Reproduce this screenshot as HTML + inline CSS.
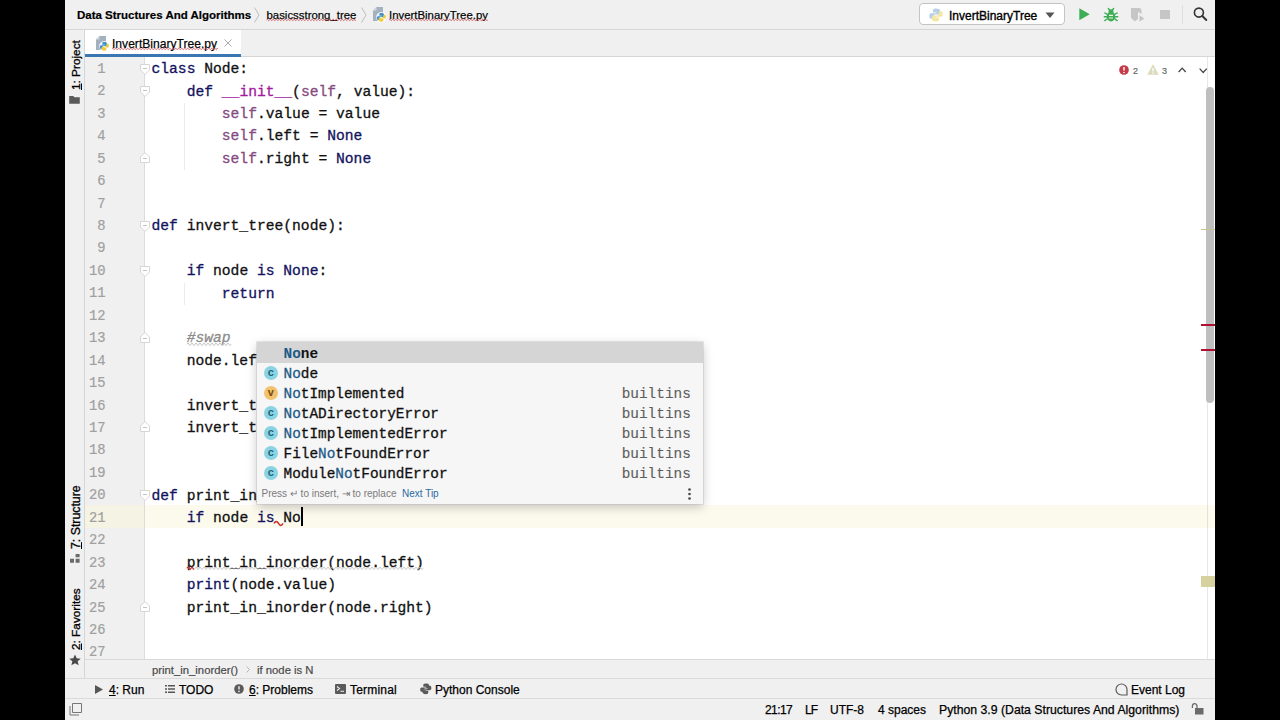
<!DOCTYPE html>
<html lang="en">
<head>
<meta charset="utf-8">
<title>InvertBinaryTree.py</title>
<style>
*{box-sizing:border-box;margin:0;padding:0}
html,body{width:1280px;height:720px;overflow:hidden;background:#000}
body{position:relative;font-family:"Liberation Sans",sans-serif;color:#000;-webkit-text-stroke:0.2px}
#app{position:absolute;left:65px;top:0;width:1150px;height:720px;background:#fff;overflow:hidden}
.abs{position:absolute}
svg{position:absolute;overflow:visible}
/* top nav */
#nav{left:0;top:0;width:1150px;height:30px;background:#f0f0f0;border-bottom:1px solid #d6d6d6}
#nav .t{position:absolute;top:6.7px;font-size:12px;line-height:16px;white-space:nowrap;color:#000}
.wavy{text-decoration:none}
/* tabs */
#tabs{left:20px;top:30px;width:1130px;height:27px;background:#f0f0f0;border-bottom:1px solid #d6d6d6}
#tab{left:0;top:0;width:155.6px;height:27px;background:#fff}
#tab .ul{position:absolute;left:0;bottom:0;width:155.6px;height:3.5px;background:#3a76b0}
/* left strip */
#strip{left:0;top:30px;width:20px;height:649px;background:#f0f0f0;border-right:1px solid #d6d6d6}
.vt{position:absolute;white-space:nowrap;font-size:12.4px;line-height:14px;-webkit-text-stroke:0.3px;transform-origin:0 0;transform:rotate(-90deg);color:#000}
/* editor */
#gutter{left:20px;top:57px;width:60px;height:602px;background:#f0f0f0;border-right:1px solid #dcdcdc}
.ln{position:absolute;left:0;width:20.5px;height:22.4px;text-align:right;font-family:"Liberation Mono",monospace;font-size:13.8px;line-height:22.4px;color:#a0a0a0}
#code{left:86.5px;top:57px;width:1040px;height:601px;font-family:"Liberation Mono",monospace;font-size:14.65px;line-height:22.4px;white-space:pre;color:#111;-webkit-text-stroke:0.3px}
.cl{position:absolute;left:0;height:22.4px;white-space:pre}
.k{color:#12125e}.s{color:#854a80}.m{color:#a3199f}.c{color:#8c8c8c;font-style:italic}.pb{color:#12125e}
.wv{text-decoration:underline wavy #b0b0b0;text-decoration-thickness:1px;text-underline-offset:3px}
.err{text-decoration:underline wavy #e03030;text-decoration-thickness:1px;text-underline-offset:3px}
#curline{left:80px;top:505.100px;width:1070px;height:22.900px;background:#fcfaed}
#caret{left:235.8px;top:507px;width:2px;height:19px;background:#000}
.guide{position:absolute;width:1px;background:#ebebeb}
.fold{position:absolute}
/* right scrollbar */
#sbar{left:1142px;top:57px;width:8px;height:602px;border-left:1px solid rgba(0,0,0,.09)}
#thumb{left:1141px;top:87px;width:7.5px;height:316px;background:#bfbfbf;border-radius:4px}
.mk{position:absolute;left:1136px;width:14px;height:2px}
/* bottom */
#crumbs{left:20px;top:659px;width:1130px;height:20px;background:#f0f0f0;border-top:1px solid #d9d9d9;font-size:11.3px;color:#4a4a4a}
#tools{-webkit-text-stroke:0.25px;left:0;top:677.5px;width:1150px;height:21px;background:#f0f0f0;border-top:1px solid #dadada;font-size:12px}
#status{-webkit-text-stroke:0.25px;left:0;top:698px;width:1150px;height:22px;background:#f0f0f0;border-top:1px solid #dadada;font-size:12px}
.bt{position:absolute;white-space:nowrap;line-height:16px}
u{text-underline-offset:1px}
/* popup */
#pop{left:191.5px;top:342px;width:446.800px;height:162.200px;background:#f6f6f6;box-shadow:0 0 0 1px rgba(0,0,0,.08),0 3px 10px rgba(0,0,0,.22)}
#pop .row{position:absolute;left:0;width:446.800px;height:20px;font-family:"Liberation Mono",monospace;font-size:14.4px;line-height:23px;white-space:pre;color:#111;-webkit-text-stroke:0.3px}
#pop .row.sel{background:#d5d5d5;font-weight:bold;-webkit-text-stroke:0;height:21px}
#pop .row.sel .nm{top:1px}
#pop .row .nm{position:absolute;left:27px;top:0}
#pop .row .bi{position:absolute;right:12.5px;top:0;color:#5e5e5e;-webkit-text-stroke:0.15px}
#pop .row .ic{position:absolute;left:7.200px;top:3.400px;width:14px;height:14px;border-radius:7px;font-family:"Liberation Sans",sans-serif;font-size:11px;line-height:12.800px;-webkit-text-stroke:0;text-align:center;font-weight:bold}
.ic-c{background:#8ad3e2;color:#1f637b}
.ic-v{background:#f2c36f;color:#7d4c0e}
.hl{color:#1d5a88}
#pop .ft{position:absolute;left:5px;top:144.5px;font-size:10px;line-height:14px;color:#7a7a7a;-webkit-text-stroke:0;white-space:nowrap}
#pop .ft b{font-weight:normal;color:#2a6aa3}
</style>
</head>
<body>
<div id="app">
  <div id="nav" class="abs">
    <span class="t" style="left:12px;font-weight:bold;font-size:11.5px">Data Structures And Algorithms</span>
    <svg style="left:189px;top:7px" width="6" height="16" viewBox="0 0 6 16"><path d="M0.5 0.5 L5 8 L0.5 15.5" fill="none" stroke="#bdbdbd" stroke-width="1"/></svg>
    <span class="t wavy" style="left:201.5px;font-size:11.4px">basicsstrong_tree</span>
    <svg style="left:296px;top:7px" width="6" height="16" viewBox="0 0 6 16"><path d="M0.5 0.5 L5 8 L0.5 15.5" fill="none" stroke="#bdbdbd" stroke-width="1"/></svg>
    <svg style="left:307.6px;top:7.4px" width="13" height="15" viewBox="0 0 13 15"><path d="M3.500 0H10V14H0V3.500Z" fill="#a3b2be"/><path d="M0 3.500H3.500V0Z" fill="#cdd6dd"/><circle cx="8.300" cy="10.300" r="5.200" fill="#fff" opacity=".85"/><g transform="translate(3.600 5.600) scale(.68)"><path d="M7 0.500c-3 0-3 1-3 2.500v1.500h3.500v.8H2.200C.8 5.300.3 6.400.3 8s.5 2.700 1.900 2.700H4V8.800c0-1.300 1-2.300 2.300-2.300h3c1 0 1.700-.8 1.700-1.800V3C11 1.200 9.800.5 7 .5z" fill="#3f92d2"/><path d="M7 13.500c3 0 3-1 3-2.500V9.500H6.500v-.8h5.300c1.400 0 1.900-1.100 1.900-2.700s-.5-2.700-1.900-2.700H10v1.900c0 1.300-1 2.300-2.300 2.300h-3c-1 0-1.700.8-1.700 1.800V11c0 1.800 1.200 2.500 4 2.500z" fill="#f0cd38"/></g></svg>
    <span class="t wavy" style="left:324px;font-size:11.4px">InvertBinaryTree.py</span>
    <!-- run config -->
    <div class="abs" style="left:854px;top:3.400px;width:146px;height:22px;background:#fff;border:1px solid #c4c4c4;border-radius:4px"></div>
    <svg style="left:864px;top:8px" width="14" height="14" viewBox="0 0 14 14"><path d="M7 0.5c-3 0-3 1-3 2.5v1.5h3.5v.8H2.2C.8 5.300.3 6.400.3 8s.5 2.700 1.900 2.700H4V8.800c0-1.300 1-2.300 2.300-2.300h3c1 0 1.700-.8 1.700-1.800V3C11 1.200 9.800.5 7 .5z" fill="#b7d0e6"/><path d="M7 13.500c3 0 3-1 3-2.500V9.500H6.500v-.8h5.300c1.400 0 1.900-1.100 1.900-2.700s-.5-2.700-1.900-2.700H10v1.900c0 1.300-1 2.300-2.300 2.300h-3c-1 0-1.700.8-1.700 1.800V11c0 1.800 1.200 2.500 4 2.500z" fill="#f5e6a0"/></svg>
    <span class="t" style="left:884px;top:7.600px;font-size:12px;-webkit-text-stroke:0.35px">InvertBinaryTree</span>
    <svg style="left:980.400px;top:11.800px" width="10" height="7" viewBox="0 0 10 7"><path d="M0.500.5h9L5 6z" fill="#555"/></svg>
    <svg style="left:1013.7px;top:8px" width="11" height="12.5" viewBox="0 0 11 12.5"><path d="M0.300.3L10.700 6.250L0.300 12.200z" fill="#3dae55"/></svg>
    <svg style="left:1038.500px;top:7.900px" width="14" height="14" viewBox="0 0 14 14"><ellipse cx="7" cy="8.600" rx="4.300" ry="4.900" fill="#3dae55"/><circle cx="7" cy="3.700" r="2.500" fill="#3dae55"/><path d="M3 6.200L0.800 5M3 8.800H0.300M3 11L0.800 12.600M11 6.200L13.200 5M11 8.800H13.700M11 11L13.200 12.600M5.600 2L4.400.5M8.400 2L9.600.5" stroke="#3dae55" stroke-width="1.400" fill="none" stroke-linecap="round"/><path d="M5 7.400h4M5 10h4" stroke="#eaf5ec" stroke-width="1.100"/></svg>
    <svg style="left:1065px;top:7px" width="16" height="16" viewBox="0 0 16 16"><path d="M1 1h8c1.500 0 2.500 1 2.500 2.500V7L8 5v7l-3 2.500L1 11z" fill="#c6c6c6"/><path d="M9 7.500l6 4-6 4z" fill="#c6c6c6" stroke="#f2f2f2" stroke-width=".8"/></svg>
    <div class="abs" style="left:1095.300px;top:9.700px;width:9.700px;height:9.300px;background:#c6c6c6"></div>
    <div class="abs" style="left:1116.500px;top:5px;width:1px;height:19px;background:#dfdfdf"></div>
    <svg style="left:1127.600px;top:7.300px" width="15" height="15" viewBox="0 0 15 15"><circle cx="5.900" cy="5.600" r="4.500" fill="none" stroke="#333" stroke-width="1.600"/><path d="M9.300 9l4 4" stroke="#333" stroke-width="1.900" stroke-linecap="round"/></svg>
  </div>

  <div id="strip" class="abs">
    <span class="vt" style="left:3.500px;top:59.900px;font-size:11.800px"><u>1</u>: Project</span>
    <svg style="left:4.200px;top:64.800px" width="11" height="8.800" viewBox="0 0 12 10"><path d="M0 1h4.500l1.500 1.500h6V10H0z" fill="#5a5a5a"/></svg>
    <span class="vt" style="left:3.500px;top:518.900px;font-size:12.300px"><u>7</u>: Structure</span>
    <svg style="left:4.800px;top:523.500px" width="9.600" height="8.800" viewBox="0 0 12 11"><path d="M7 0h5v4H7zM0 6h5v5H0zM7 6h5v5H7z" fill="#6a6a6a"/></svg>
    <span class="vt" style="left:3.500px;top:619.500px;font-size:11.800px"><u>2</u>: Favorites</span>
    <svg style="left:3.600px;top:623.800px" width="12" height="12" viewBox="0 0 14 14"><path d="M7 0.500l2 4.500 4.700.4-3.600 3.100 1.100 4.700L7 10.700 2.800 13.200l1.100-4.700L.3 5.400 5 5z" fill="#4a4a4a"/></svg>
  </div>

  <div id="tabs" class="abs">
    <div id="tab" class="abs"><div class="ul"></div>
      <svg style="left:11px;top:6px" width="13" height="15" viewBox="0 0 13 15"><path d="M3.500 0H10V14H0V3.500Z" fill="#a3b2be"/><path d="M0 3.500H3.500V0Z" fill="#cdd6dd"/><circle cx="8.300" cy="10.300" r="5.200" fill="#fff" opacity=".85"/><g transform="translate(3.600 5.600) scale(.68)"><path d="M7 0.500c-3 0-3 1-3 2.500v1.500h3.500v.8H2.200C.8 5.300.3 6.400.3 8s.5 2.700 1.900 2.700H4V8.800c0-1.300 1-2.300 2.300-2.300h3c1 0 1.700-.8 1.700-1.800V3C11 1.200 9.800.5 7 .5z" fill="#3f92d2"/><path d="M7 13.500c3 0 3-1 3-2.500V9.500H6.500v-.8h5.300c1.400 0 1.900-1.100 1.900-2.700s-.5-2.700-1.900-2.700H10v1.900c0 1.300-1 2.300-2.300 2.300h-3c-1 0-1.700.8-1.700 1.800V11c0 1.800 1.200 2.500 4 2.500z" fill="#f0cd38"/></g></svg>
      <span class="abs wavy" style="left:27px;top:6px;font-size:12.1px;line-height:16px;white-space:nowrap">InvertBinaryTree.py</span>
      <svg style="left:139px;top:9px" width="8" height="8" viewBox="0 0 8 8"><path d="M0.500.5l7 7M7.500.5l-7 7" stroke="#a8a8a8" stroke-width="1"/></svg>
    </div>
  </div>

  <div id="gutter" class="abs">
<div class="abs" style="left:0;top:448.100px;width:59px;height:22.900px;background:#f5f3e3"></div>
<div class="ln" style="top:1.9px">1</div>
<div class="ln" style="top:24.3px">2</div>
<div class="ln" style="top:46.8px">3</div>
<div class="ln" style="top:69.2px">4</div>
<div class="ln" style="top:91.7px">5</div>
<div class="ln" style="top:114.1px">6</div>
<div class="ln" style="top:136.5px">7</div>
<div class="ln" style="top:159.0px">8</div>
<div class="ln" style="top:181.4px">9</div>
<div class="ln" style="top:203.9px">10</div>
<div class="ln" style="top:226.3px">11</div>
<div class="ln" style="top:248.7px">12</div>
<div class="ln" style="top:271.2px">13</div>
<div class="ln" style="top:293.6px">14</div>
<div class="ln" style="top:316.1px">15</div>
<div class="ln" style="top:338.5px">16</div>
<div class="ln" style="top:360.9px">17</div>
<div class="ln" style="top:383.4px">18</div>
<div class="ln" style="top:405.8px">19</div>
<div class="ln" style="top:428.3px">20</div>
<div class="ln" style="top:450.7px">21</div>
<div class="ln" style="top:473.1px">22</div>
<div class="ln" style="top:495.6px">23</div>
<div class="ln" style="top:518.0px">24</div>
<div class="ln" style="top:540.5px">25</div>
<div class="ln" style="top:562.9px">26</div>
<div class="ln" style="top:585.3px">27</div>
  </div>
  <div id="curline" class="abs"></div>
  <div id="code" class="abs">
<div class="cl" style="top:1.1px"><span class="k">class</span> Node:</div>
<div class="cl" style="top:23.5px">    <span class="k">def</span> <span class="m">__init__</span>(<span class="s">self</span>, value):</div>
<div class="cl" style="top:46.0px">        <span class="s">self</span>.value = value</div>
<div class="cl" style="top:68.4px">        <span class="s">self</span>.left = <span class="k">None</span></div>
<div class="cl" style="top:90.9px">        <span class="s">self</span>.right = <span class="k">None</span></div>
<div class="cl" style="top:158.2px"><span class="k">def</span> invert_tree(node):</div>
<div class="cl" style="top:203.1px">    <span class="k">if</span> node <span class="k">is</span> <span class="k">None</span>:</div>
<div class="cl" style="top:225.5px">        <span class="k">return</span></div>
<div class="cl" style="top:270.4px">    <span class="c">#swap</span></div>
<div class="cl" style="top:292.8px">    node.left, node.right = node.right, node.left</div>
<div class="cl" style="top:337.7px">    invert_tree(node.left)</div>
<div class="cl" style="top:360.1px">    invert_tree(node.right)</div>
<div class="cl" style="top:427.5px"><span class="k">def</span> print_in_inorder(node):</div>
<div class="cl" style="top:449.9px">    <span class="k">if</span> node <span class="k">is</span> No</div>
<div class="cl" style="top:494.8px">    print_in_inorder(node.left)</div>
<div class="cl" style="top:517.2px">    <span class="pb">print</span>(node.value)</div>
<div class="cl" style="top:539.7px">    print_in_inorder(node.right)</div>
  </div>
  <div id="caret" class="abs"></div>
<svg style="left:74.5px;top:63.6px" width="10" height="11" viewBox="0 0 10 11"><path d="M0.5 0.5H9.5V6L5 10.5L0.5 6Z" fill="#fff" stroke="#d6d6d6"/><path d="M3 4.5H7" stroke="#c4c4c4"/></svg>
<svg style="left:74.5px;top:86.0px" width="10" height="11" viewBox="0 0 10 11"><path d="M0.5 0.5H9.5V6L5 10.5L0.5 6Z" fill="#fff" stroke="#d6d6d6"/><path d="M3 4.5H7" stroke="#c4c4c4"/></svg>
<svg style="left:74.5px;top:152.0px" width="10" height="11" viewBox="0 0 10 11"><path d="M0.5 10.5H9.5V5L5 0.5L0.5 5Z" fill="#fff" stroke="#d6d6d6"/><path d="M3 6.5H7" stroke="#c4c4c4"/></svg>
<svg style="left:74.5px;top:220.7px" width="10" height="11" viewBox="0 0 10 11"><path d="M0.5 0.5H9.5V6L5 10.5L0.5 6Z" fill="#fff" stroke="#d6d6d6"/><path d="M3 4.5H7" stroke="#c4c4c4"/></svg>
<svg style="left:74.5px;top:265.6px" width="10" height="11" viewBox="0 0 10 11"><path d="M0.5 0.5H9.5V6L5 10.5L0.5 6Z" fill="#fff" stroke="#d6d6d6"/><path d="M3 4.5H7" stroke="#c4c4c4"/></svg>
<svg style="left:74.5px;top:331.5px" width="10" height="11" viewBox="0 0 10 11"><path d="M0.5 10.5H9.5V5L5 0.5L0.5 5Z" fill="#fff" stroke="#d6d6d6"/><path d="M3 6.5H7" stroke="#c4c4c4"/></svg>
<svg style="left:74.5px;top:421.2px" width="10" height="11" viewBox="0 0 10 11"><path d="M0.5 10.5H9.5V5L5 0.5L0.5 5Z" fill="#fff" stroke="#d6d6d6"/><path d="M3 6.5H7" stroke="#c4c4c4"/></svg>
<svg style="left:74.5px;top:490.0px" width="10" height="11" viewBox="0 0 10 11"><path d="M0.5 0.5H9.5V6L5 10.5L0.5 6Z" fill="#fff" stroke="#d6d6d6"/><path d="M3 4.5H7" stroke="#c4c4c4"/></svg>
<svg style="left:74.5px;top:600.8px" width="10" height="11" viewBox="0 0 10 11"><path d="M0.5 10.5H9.5V5L5 0.5L0.5 5Z" fill="#fff" stroke="#d6d6d6"/><path d="M3 6.5H7" stroke="#c4c4c4"/></svg>
<div class="guide" style="left:119px;top:103.0px;height:67.3px"></div>
<div class="guide" style="left:119px;top:282.5px;height:22.4px"></div>
<svg style="left:0;top:0" width="1150" height="720"><path d="M122.0 344.3Q123.0 341.9 124.0 344.3Q125.0 346.7 126.0 344.3Q127.0 341.9 128.0 344.3Q129.0 346.7 130.0 344.3Q131.0 341.9 132.0 344.3Q133.0 346.7 134.0 344.3Q135.0 341.9 136.0 344.3Q137.0 346.7 138.0 344.3Q139.0 341.9 140.0 344.3Q141.0 346.7 142.0 344.3Q143.0 341.9 144.0 344.3Q145.0 346.7 146.0 344.3Q147.0 341.9 148.0 344.3Q149.0 346.7 150.0 344.3Q151.0 341.9 152.0 344.3Q153.0 346.7 154.0 344.3Q155.0 341.9 156.0 344.3Q157.0 346.7 158.0 344.3Q159.0 341.9 160.0 344.3Q161.0 346.7 162.0 344.3Q163.0 341.9 164.0 344.3Q165.0 346.7 166.0 344.3" fill="none" stroke="#bdbdbd" stroke-width="1.0"/></svg>
<svg style="left:0;top:0" width="1150" height="720"><path d="M122.0 568.3Q123.0 565.9 124.0 568.3Q125.0 570.7 126.0 568.3Q127.0 565.9 128.0 568.3Q129.0 570.7 130.0 568.3Q131.0 565.9 132.0 568.3Q133.0 570.7 134.0 568.3Q135.0 565.9 136.0 568.3Q137.0 570.7 138.0 568.3Q139.0 565.9 140.0 568.3Q141.0 570.7 142.0 568.3Q143.0 565.9 144.0 568.3Q145.0 570.7 146.0 568.3Q147.0 565.9 148.0 568.3Q149.0 570.7 150.0 568.3Q151.0 565.9 152.0 568.3Q153.0 570.7 154.0 568.3Q155.0 565.9 156.0 568.3Q157.0 570.7 158.0 568.3Q159.0 565.9 160.0 568.3Q161.0 570.7 162.0 568.3Q163.0 565.9 164.0 568.3Q165.0 570.7 166.0 568.3Q167.0 565.9 168.0 568.3Q169.0 570.7 170.0 568.3Q171.0 565.9 172.0 568.3Q173.0 570.7 174.0 568.3Q175.0 565.9 176.0 568.3Q177.0 570.7 178.0 568.3Q179.0 565.9 180.0 568.3Q181.0 570.7 182.0 568.3Q183.0 565.9 184.0 568.3Q185.0 570.7 186.0 568.3Q187.0 565.9 188.0 568.3Q189.0 570.7 190.0 568.3Q191.0 565.9 192.0 568.3Q193.0 570.7 194.0 568.3Q195.0 565.9 196.0 568.3Q197.0 570.7 198.0 568.3Q199.0 565.9 200.0 568.3Q201.0 570.7 202.0 568.3Q203.0 565.9 204.0 568.3Q205.0 570.7 206.0 568.3Q207.0 565.9 208.0 568.3Q209.0 570.7 210.0 568.3Q211.0 565.9 212.0 568.3Q213.0 570.7 214.0 568.3Q215.0 565.9 216.0 568.3Q217.0 570.7 218.0 568.3Q219.0 565.9 220.0 568.3Q221.0 570.7 222.0 568.3Q223.0 565.9 224.0 568.3Q225.0 570.7 226.0 568.3Q227.0 565.9 228.0 568.3Q229.0 570.7 230.0 568.3Q231.0 565.9 232.0 568.3Q233.0 570.7 234.0 568.3Q235.0 565.9 236.0 568.3Q237.0 570.7 238.0 568.3Q239.0 565.9 240.0 568.3Q241.0 570.7 242.0 568.3Q243.0 565.9 244.0 568.3Q245.0 570.7 246.0 568.3Q247.0 565.9 248.0 568.3Q249.0 570.7 250.0 568.3Q251.0 565.9 252.0 568.3Q253.0 570.7 254.0 568.3Q255.0 565.9 256.0 568.3Q257.0 570.7 258.0 568.3Q259.0 565.9 260.0 568.3Q261.0 570.7 262.0 568.3Q263.0 565.9 264.0 568.3Q265.0 570.7 266.0 568.3Q267.0 565.9 268.0 568.3Q269.0 570.7 270.0 568.3Q271.0 565.9 272.0 568.3Q273.0 570.7 274.0 568.3Q275.0 565.9 276.0 568.3Q277.0 570.7 278.0 568.3Q279.0 565.9 280.0 568.3Q281.0 570.7 282.0 568.3Q283.0 565.9 284.0 568.3Q285.0 570.7 286.0 568.3Q287.0 565.9 288.0 568.3Q289.0 570.7 290.0 568.3Q291.0 565.9 292.0 568.3Q293.0 570.7 294.0 568.3Q295.0 565.9 296.0 568.3Q297.0 570.7 298.0 568.3Q299.0 565.9 300.0 568.3Q301.0 570.7 302.0 568.3Q303.0 565.9 304.0 568.3Q305.0 570.7 306.0 568.3Q307.0 565.9 308.0 568.3Q309.0 570.7 310.0 568.3Q311.0 565.9 312.0 568.3Q313.0 570.7 314.0 568.3Q315.0 565.9 316.0 568.3Q317.0 570.7 318.0 568.3Q319.0 565.9 320.0 568.3Q321.0 570.7 322.0 568.3Q323.0 565.9 324.0 568.3Q325.0 570.7 326.0 568.3Q327.0 565.9 328.0 568.3Q329.0 570.7 330.0 568.3Q331.0 565.9 332.0 568.3Q333.0 570.7 334.0 568.3Q335.0 565.9 336.0 568.3Q337.0 570.7 338.0 568.3Q339.0 565.9 340.0 568.3Q341.0 570.7 342.0 568.3Q343.0 565.9 344.0 568.3Q345.0 570.7 346.0 568.3Q347.0 565.9 348.0 568.3Q349.0 570.7 350.0 568.3Q351.0 565.9 352.0 568.3Q353.0 570.7 354.0 568.3Q355.0 565.9 356.0 568.3Q357.0 570.7 358.0 568.3" fill="none" stroke="#c4c4c4" stroke-width="1.0"/></svg>
<svg style="left:0;top:0" width="1150" height="720"><path d="M122.0 568.3Q123.0 565.9 124.0 568.3Q125.0 570.7 126.0 568.3Q127.0 565.9 128.0 568.3Q128.2 570.7 128.5 568.3" fill="none" stroke="#c43030" stroke-width="1.2"/></svg>
<svg style="left:0;top:0" width="1150" height="720"><path d="M209.0 523.4Q211.2 519.4 213.5 523.4Q215.8 527.4 218.0 523.4" fill="none" stroke="#c82a2a" stroke-width="1.5"/></svg>
<svg style="left:0;top:0" width="1150" height="720"><path d="M201.5 19.9Q202.2 18.5 203.0 19.9Q203.8 21.3 204.5 19.9Q205.2 18.5 206.0 19.9Q206.8 21.3 207.5 19.9Q208.2 18.5 209.0 19.9Q209.8 21.3 210.5 19.9Q211.2 18.5 212.0 19.9Q212.8 21.3 213.5 19.9Q214.2 18.5 215.0 19.9Q215.8 21.3 216.5 19.9Q217.2 18.5 218.0 19.9Q218.8 21.3 219.5 19.9Q220.2 18.5 221.0 19.9Q221.8 21.3 222.5 19.9Q223.2 18.5 224.0 19.9Q224.8 21.3 225.5 19.9Q226.2 18.5 227.0 19.9Q227.8 21.3 228.5 19.9Q229.2 18.5 230.0 19.9Q230.8 21.3 231.5 19.9Q232.2 18.5 233.0 19.9Q233.8 21.3 234.5 19.9Q235.2 18.5 236.0 19.9Q236.8 21.3 237.5 19.9Q238.2 18.5 239.0 19.9Q239.8 21.3 240.5 19.9Q241.2 18.5 242.0 19.9Q242.8 21.3 243.5 19.9Q244.2 18.5 245.0 19.9Q245.8 21.3 246.5 19.9Q247.2 18.5 248.0 19.9Q248.8 21.3 249.5 19.9Q250.2 18.5 251.0 19.9Q251.8 21.3 252.5 19.9Q253.2 18.5 254.0 19.9Q254.8 21.3 255.5 19.9Q256.2 18.5 257.0 19.9Q257.8 21.3 258.5 19.9Q259.2 18.5 260.0 19.9Q260.8 21.3 261.5 19.9Q262.2 18.5 263.0 19.9Q263.8 21.3 264.5 19.9Q265.2 18.5 266.0 19.9Q266.8 21.3 267.5 19.9Q268.2 18.5 269.0 19.9Q269.8 21.3 270.5 19.9Q271.2 18.5 272.0 19.9Q272.8 21.3 273.5 19.9Q274.2 18.5 275.0 19.9Q275.8 21.3 276.5 19.9Q277.2 18.5 278.0 19.9Q278.8 21.3 279.5 19.9Q280.2 18.5 281.0 19.9Q281.8 21.3 282.5 19.9Q283.2 18.5 284.0 19.9Q284.8 21.3 285.5 19.9Q286.2 18.5 287.0 19.9Q287.8 21.3 288.5 19.9Q289.2 18.5 290.0 19.9Q290.2 21.3 290.5 19.9" fill="none" stroke="rgba(196,52,62,.85)" stroke-width="0.9"/></svg>
<svg style="left:0;top:0" width="1150" height="720"><path d="M324.0 19.9Q324.8 18.5 325.5 19.9Q326.2 21.3 327.0 19.9Q327.8 18.5 328.5 19.9Q329.2 21.3 330.0 19.9Q330.8 18.5 331.5 19.9Q332.2 21.3 333.0 19.9Q333.8 18.5 334.5 19.9Q335.2 21.3 336.0 19.9Q336.8 18.5 337.5 19.9Q338.2 21.3 339.0 19.9Q339.8 18.5 340.5 19.9Q341.2 21.3 342.0 19.9Q342.8 18.5 343.5 19.9Q344.2 21.3 345.0 19.9Q345.8 18.5 346.5 19.9Q347.2 21.3 348.0 19.9Q348.8 18.5 349.5 19.9Q350.2 21.3 351.0 19.9Q351.8 18.5 352.5 19.9Q353.2 21.3 354.0 19.9Q354.8 18.5 355.5 19.9Q356.2 21.3 357.0 19.9Q357.8 18.5 358.5 19.9Q359.2 21.3 360.0 19.9Q360.8 18.5 361.5 19.9Q362.2 21.3 363.0 19.9Q363.8 18.5 364.5 19.9Q365.2 21.3 366.0 19.9Q366.8 18.5 367.5 19.9Q368.2 21.3 369.0 19.9Q369.8 18.5 370.5 19.9Q371.2 21.3 372.0 19.9Q372.8 18.5 373.5 19.9Q374.2 21.3 375.0 19.9Q375.8 18.5 376.5 19.9Q377.2 21.3 378.0 19.9Q378.8 18.5 379.5 19.9Q380.2 21.3 381.0 19.9Q381.8 18.5 382.5 19.9Q383.2 21.3 384.0 19.9Q384.8 18.5 385.5 19.9Q386.2 21.3 387.0 19.9Q387.8 18.5 388.5 19.9Q389.2 21.3 390.0 19.9Q390.8 18.5 391.5 19.9Q392.2 21.3 393.0 19.9Q393.8 18.5 394.5 19.9Q395.2 21.3 396.0 19.9Q396.8 18.5 397.5 19.9Q398.2 21.3 399.0 19.9Q399.8 18.5 400.5 19.9Q401.2 21.3 402.0 19.9Q402.8 18.5 403.5 19.9Q404.2 21.3 405.0 19.9Q405.8 18.5 406.5 19.9Q407.2 21.3 408.0 19.9Q408.8 18.5 409.5 19.9Q410.2 21.3 411.0 19.9Q411.8 18.5 412.5 19.9Q413.2 21.3 414.0 19.9Q414.8 18.5 415.5 19.9Q416.2 21.3 417.0 19.9Q417.8 18.5 418.5 19.9Q419.2 21.3 420.0 19.9Q420.8 18.5 421.5 19.9Q422.0 21.3 422.5 19.9" fill="none" stroke="rgba(196,52,62,.85)" stroke-width="0.9"/></svg>
<svg style="left:0;top:0" width="1150" height="720"><path d="M47.0 48.9Q47.8 47.5 48.5 48.9Q49.2 50.3 50.0 48.9Q50.8 47.5 51.5 48.9Q52.2 50.3 53.0 48.9Q53.8 47.5 54.5 48.9Q55.2 50.3 56.0 48.9Q56.8 47.5 57.5 48.9Q58.2 50.3 59.0 48.9Q59.8 47.5 60.5 48.9Q61.2 50.3 62.0 48.9Q62.8 47.5 63.5 48.9Q64.2 50.3 65.0 48.9Q65.8 47.5 66.5 48.9Q67.2 50.3 68.0 48.9Q68.8 47.5 69.5 48.9Q70.2 50.3 71.0 48.9Q71.8 47.5 72.5 48.9Q73.2 50.3 74.0 48.9Q74.8 47.5 75.5 48.9Q76.2 50.3 77.0 48.9Q77.8 47.5 78.5 48.9Q79.2 50.3 80.0 48.9Q80.8 47.5 81.5 48.9Q82.2 50.3 83.0 48.9Q83.8 47.5 84.5 48.9Q85.2 50.3 86.0 48.9Q86.8 47.5 87.5 48.9Q88.2 50.3 89.0 48.9Q89.8 47.5 90.5 48.9Q91.2 50.3 92.0 48.9Q92.8 47.5 93.5 48.9Q94.2 50.3 95.0 48.9Q95.8 47.5 96.5 48.9Q97.2 50.3 98.0 48.9Q98.8 47.5 99.5 48.9Q100.2 50.3 101.0 48.9Q101.8 47.5 102.5 48.9Q103.2 50.3 104.0 48.9Q104.8 47.5 105.5 48.9Q106.2 50.3 107.0 48.9Q107.8 47.5 108.5 48.9Q109.2 50.3 110.0 48.9Q110.8 47.5 111.5 48.9Q112.2 50.3 113.0 48.9Q113.8 47.5 114.5 48.9Q115.2 50.3 116.0 48.9Q116.8 47.5 117.5 48.9Q118.2 50.3 119.0 48.9Q119.8 47.5 120.5 48.9Q121.2 50.3 122.0 48.9Q122.8 47.5 123.5 48.9Q124.2 50.3 125.0 48.9Q125.8 47.5 126.5 48.9Q127.2 50.3 128.0 48.9Q128.8 47.5 129.5 48.9Q130.2 50.3 131.0 48.9Q131.8 47.5 132.5 48.9Q133.2 50.3 134.0 48.9Q134.8 47.5 135.5 48.9Q136.2 50.3 137.0 48.9Q137.8 47.5 138.5 48.9Q139.2 50.3 140.0 48.9Q140.8 47.5 141.5 48.9Q142.2 50.3 143.0 48.9Q143.8 47.5 144.5 48.9Q145.2 50.3 146.0 48.9Q146.8 47.5 147.5 48.9Q148.2 50.3 149.0 48.9Q149.8 47.5 150.5 48.9Q151.2 50.3 152.0 48.9Q152.2 47.5 152.5 48.9" fill="none" stroke="rgba(196,52,62,.85)" stroke-width="0.9"/></svg>

  <div id="sbar" class="abs"></div>
  <div id="thumb" class="abs"></div>
  <div class="mk abs" style="top:228.5px;background:#c5c58a;height:1px"></div>
  <div class="mk abs" style="top:324px;background:#b01030"></div>
  <div class="mk abs" style="top:348.5px;background:#b01030"></div>
  <div class="abs" style="left:1136px;top:575.5px;width:14px;height:11.5px;background:#d6d19e"></div>

  <!-- inspections widget -->
  <svg style="left:1054.300px;top:65.200px" width="10" height="10" viewBox="0 0 11 11"><circle cx="5.500" cy="5.500" r="5.300" fill="#c43a48"/><path d="M5.500 2.300v3.800" stroke="#fff" stroke-width="1.600"/><circle cx="5.500" cy="8.200" r=".9" fill="#fff"/></svg>
  <span class="abs" style="left:1068px;top:64px;font-size:9px;line-height:14px;color:#666">2</span>
  <svg style="left:1082px;top:64px" width="12" height="11" viewBox="0 0 12 11"><path d="M6 0.300L11.700 10.700H0.300z" fill="#d9dbbc"/><path d="M6 4v3.500" stroke="#fff" stroke-width="1.400"/><circle cx="6" cy="9" r=".8" fill="#fff"/></svg>
  <span class="abs" style="left:1097px;top:64px;font-size:9px;line-height:14px;color:#666">3</span>
  <svg style="left:1112.700px;top:67.300px" width="8.400" height="5.600" viewBox="0 0 9 6"><path d="M0.700 5.300L4.500 1.200 8.300 5.300" fill="none" stroke="#444" stroke-width="1.400"/></svg>
  <svg style="left:1133.700px;top:68.300px" width="8.400" height="5.600" viewBox="0 0 9 6"><path d="M0.700.7L4.500 4.800 8.300.7" fill="none" stroke="#444" stroke-width="1.400"/></svg>

  <div id="crumbs" class="abs">
    <span class="bt" style="left:67px;top:2px">print_in_inorder()</span>
    <svg style="left:161px;top:6px" width="4" height="7" viewBox="0 0 4 7"><path d="M0.500.5L3.500 3.500 .5 6.500" fill="none" stroke="#b5b5b5" stroke-width="1"/></svg>
    <span class="bt" style="left:172px;top:2px">if node is N</span>
  </div>

  <div id="tools" class="abs">
    <svg style="left:30px;top:6px" width="8" height="9" viewBox="0 0 8 9"><path d="M0 0l8 4.500L0 9z" fill="#555"/></svg>
    <span class="bt" style="left:44px;top:3px"><u>4</u>: Run</span>
    <svg style="left:100px;top:6px" width="10" height="8" viewBox="0 0 10 8"><path d="M0 0h2v1.500H0zM3 0h7v1.500H3zM0 3.200h2v1.500H0zM3 3.200h7v1.500H3zM0 6.400h2v1.500H0zM3 6.400h7v1.500H3z" fill="#555"/></svg>
    <span class="bt" style="left:114px;top:3px">TODO</span>
    <svg style="left:169px;top:5px" width="10" height="10" viewBox="0 0 10 10"><circle cx="5" cy="5" r="4.800" fill="#5a5a5a"/><path d="M5 2.200v3.300" stroke="#f2f2f2" stroke-width="1.400"/><circle cx="5" cy="7.400" r=".8" fill="#f2f2f2"/></svg>
    <span class="bt" style="left:184px;top:3px"><u>6</u>: Problems</span>
    <svg style="left:270px;top:5px" width="11" height="10" viewBox="0 0 11 10"><rect width="11" height="10" rx="1" fill="#5a5a5a"/><path d="M2 2.500l2.500 2L2 6.500M5.500 7.300h3.500" stroke="#f2f2f2" stroke-width="1.100" fill="none"/></svg>
    <span class="bt" style="left:285px;top:3px;letter-spacing:0.2px">Terminal</span>
    <svg style="left:355px;top:4.500px" width="11.600" height="11.600" viewBox="0 0 14 14"><path d="M7 0.500c-3 0-3 1-3 2.500v1.500h3.500v.8H2.200C.8 5.300.3 6.400.3 8s.5 2.700 1.900 2.700H4V8.800c0-1.300 1-2.300 2.300-2.300h3c1 0 1.700-.8 1.700-1.800V3C11 1.200 9.800.5 7 .5z" fill="#5a5a5a"/><path d="M7 13.500c3 0 3-1 3-2.500V9.500H6.500v-.8h5.300c1.400 0 1.900-1.100 1.900-2.700s-.5-2.700-1.900-2.700H10v1.900c0 1.300-1 2.300-2.300 2.300h-3c-1 0-1.700.8-1.700 1.800V11c0 1.800 1.200 2.500 4 2.500z" fill="#5a5a5a"/></svg>
    <span class="bt" style="left:370px;top:3px">Python Console</span>
    <svg style="left:1050px;top:4px" width="13" height="13" viewBox="0 0 13 13"><path d="M6.500 1a5.500 5.500 0 1 0 0 11H12V6.500A5.500 5.500 0 0 0 6.500 1z" fill="none" stroke="#5a5a5a" stroke-width="1.200"/></svg>
    <span class="bt" style="left:1066px;top:3px">Event Log</span>
  </div>

  <div id="status" class="abs">
    <svg style="left:4px;top:4px" width="13" height="13" viewBox="0 0 13 13"><path d="M3.500 0.500h9v9h-9z" fill="none" stroke="#777" stroke-width="1"/><path d="M1 3v9h9" fill="none" stroke="#777" stroke-width="1"/></svg>
    <span class="bt" style="left:700px;top:3px;letter-spacing:-0.6px">21:17</span>
    <span class="bt" style="left:740px;top:3px;letter-spacing:-0.8px">LF</span>
    <span class="bt" style="left:765px;top:3px">UTF-8</span>
    <span class="bt" style="left:813px;top:3px">4 spaces</span>
    <span class="bt" style="left:874px;top:3px;font-size:12.25px">Python 3.9 (Data Structures And Algorithms)</span>
    <svg style="left:1126px;top:4px" width="13" height="12" viewBox="0 0 13 12"><rect x="4" y="5" width="8.500" height="6.500" fill="#6a6a6a"/><path d="M6 5V3a2.300 2.300 0 0 0-4.600 0v2" fill="none" stroke="#6a6a6a" stroke-width="1.300"/></svg>
  </div>

  <div id="pop" class="abs">
<div class="row sel" style="top:0px"><span class="nm"><span class="hl">No</span>ne</span></div>
<div class="row" style="top:21px"><span class="ic ic-c">c</span><span class="nm"><span class="hl">No</span>de</span></div>
<div class="row" style="top:41px"><span class="ic ic-v">v</span><span class="nm"><span class="hl">No</span>tImplemented</span><span class="bi">builtins</span></div>
<div class="row" style="top:61px"><span class="ic ic-c">c</span><span class="nm"><span class="hl">No</span>tADirectoryError</span><span class="bi">builtins</span></div>
<div class="row" style="top:81px"><span class="ic ic-c">c</span><span class="nm"><span class="hl">No</span>tImplementedError</span><span class="bi">builtins</span></div>
<div class="row" style="top:101px"><span class="ic ic-c">c</span><span class="nm">File<span class="hl">No</span>tFoundError</span><span class="bi">builtins</span></div>
<div class="row" style="top:121px"><span class="ic ic-c">c</span><span class="nm">Module<span class="hl">No</span>tFoundError</span><span class="bi">builtins</span></div>
    <div class="ft">Press ↵ to insert, ⇥ to replace&nbsp; <b>Next Tip</b></div>
    <svg style="left:431.500px;top:145.500px" width="3" height="12" viewBox="0 0 3 12"><circle cx="1.500" cy="1.500" r="1.350" fill="#4a4a4a"/><circle cx="1.500" cy="6" r="1.350" fill="#4a4a4a"/><circle cx="1.500" cy="10.500" r="1.350" fill="#4a4a4a"/></svg>
  </div>
</div>
</body>
</html>
